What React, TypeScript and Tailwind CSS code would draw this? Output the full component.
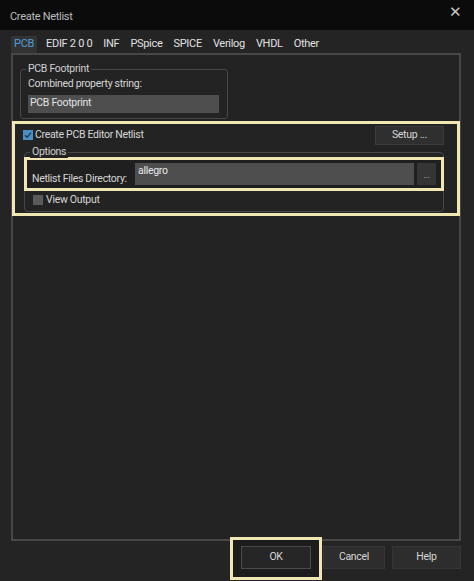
import React from "react";

const tabs = ["PCB", "EDIF 2 0 0", "INF", "PSpice", "SPICE", "Verilog", "VHDL", "Other"];

const GroupLabel = ({ children, className }: { children: React.ReactNode; className: string }) => (
  <span className={"absolute bg-[#232323] px-[2px] leading-none text-[#d0d0d0] " + className}>{children}</span>
);

export default function App() {
  return (
    <div
      className="w-[474px] h-[581px] bg-[#242424] flex flex-col text-[10.5px] tracking-[-0.3px] text-[#d6d6d6] overflow-hidden"
      style={{ fontFamily: 'Roboto, "Noto Sans", sans-serif' }}
    >
      {/* title bar */}
      <div className="h-[30px] bg-[#0b0b0b] flex items-start justify-between pl-[10px] pr-[12px]">
        <span className="mt-[9px] text-[11px] text-[#bdbdbd]">Create Netlist</span>
        <span className="mt-[1px] text-[#c8c8c8] text-[15px]">✕</span>
      </div>

      <div className="flex-1 flex flex-col pl-[11px] pr-[12px]">
        {/* tabs */}
        <div className="flex items-end h-[23px] pt-[6px]">
          {tabs.map((t, i) => (
            <div
              key={t}
              className={
                i === 0
                  ? "h-[17px] px-[3px] bg-[#333333] text-[#4b9fd8] text-[11px] flex items-center mr-[6px]"
                  : "h-[17px] px-[3px] text-[#e0e0e0] text-[11px] flex items-center mr-[5px]"
              }
            >
              {t}
            </div>
          ))}
        </div>

        {/* tab page */}
        <div className="w-[450px] h-[488px] border-2 border-[#474747] bg-[#232323] flex flex-col">
          <div className="relative mt-[14px] ml-[7px] w-[208px] h-[50px] border border-[#474747] rounded-[3px] px-[7px]">
            <GroupLabel className="-top-[6px] left-[5px]">PCB Footprint</GroupLabel>
            <div className="mt-[9px] leading-none">Combined property string:</div>
            <div className="mt-[5px] h-[18px] w-[191px] bg-[#4e4e4e] flex items-center px-[2px] leading-none text-[#e2e2e2]">
              PCB Footprint
            </div>
          </div>

          {/* highlighted section */}
          <div className="mt-[2px] -mx-[1px] h-[95px] border-[3px] border-[#f1e7b4] flex flex-col px-[8px]">
            <div className="flex items-start justify-between mt-[2px]">
              <div className="flex items-center mt-[4px]">
                <span className="w-[10px] h-[10px] bg-[#4a8fc4] flex items-center justify-center">
                  <svg width="8" height="8" viewBox="0 0 8 8">
                    <path d="M1 4.2 L3.2 6.2 L7 1.6" stroke="#1e3a52" strokeWidth="1.4" fill="none" />
                  </svg>
                </span>
                <span className="ml-[2px] leading-none">Create PCB Editor Netlist</span>
              </div>
              <div className="w-[69px] h-[19px] bg-[#2f2f2f] border border-[#3b3b3b] flex items-center justify-center leading-none mr-[5px]">
                Setup ...
              </div>
            </div>

            <div className="relative mt-[7px] ml-[1px] w-[420px] h-[60px] border border-[#474747] rounded-[4px]">
              <GroupLabel className="-top-[6px] left-[5px]">Options</GroupLabel>
              <div className="mt-[4px] -mx-[1px] h-[34px] border-[3px] border-[#f1e7b4] bg-[#1f1f1f] flex items-center pl-[5px] pr-[3px]">
                <span className="w-[103px] mt-[11px] leading-none whitespace-nowrap">Netlist Files Directory:</span>
                <div className="h-[22px] w-[279px] bg-[#4e4e4e] px-[3px] pt-[3px] leading-none text-[#e6e6e6]">
                  allegro
                </div>
                <div className="ml-[3px] h-[22px] w-[19px] bg-[#353535] flex items-end justify-center pb-[5px] leading-none text-[9px] text-[#bbbbbb]">
                  ...
                </div>
              </div>
              <div className="flex items-center mt-[4px] ml-[8px]">
                <span className="w-[10px] h-[10px] bg-[#5a5a5a]" />
                <span className="ml-[3px] leading-none">View Output</span>
              </div>
            </div>
          </div>
        </div>

        {/* buttons */}
        <div className="flex items-start justify-end mt-[-4px] mr-[1px]">
          <div className="border-[3px] border-[#f1e7b4] px-[8px] pt-[6px] pb-[8px] bg-[#1c1c1c]">
            <div className="w-[70px] h-[23px] border border-[#4a4a4a] bg-[#262626] flex items-center justify-center leading-none">
              OK
            </div>
          </div>
          <div className="mt-[9px] ml-[1px] w-[62px] h-[23px] bg-[#2d2d2d] border border-[#363636] flex items-center justify-center leading-none">
            Cancel
          </div>
          <div className="mt-[9px] ml-[7px] w-[69px] h-[23px] bg-[#2d2d2d] border border-[#363636] flex items-center justify-center leading-none">
            Help
          </div>
        </div>
      </div>
    </div>
  );
}
